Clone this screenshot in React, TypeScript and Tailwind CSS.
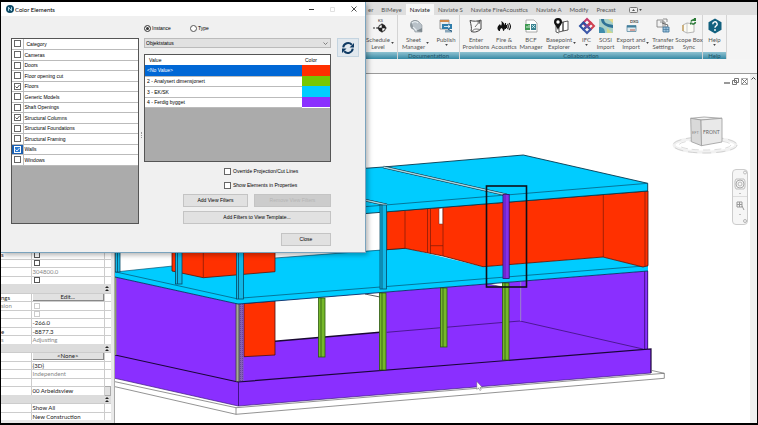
import { useState, type ReactNode } from "react";
import { clsx } from "clsx";

const TABS = [
  "er",
  "BIMeye",
  "Naviate",
  "Naviate S",
  "Naviate FireAcoustics",
  "Naviate A",
  "Modify",
  "Precast",
];

const CATEGORIES = [
  { name: "Cameras", checked: false },
  { name: "Doors", checked: false },
  { name: "Floor opening cut", checked: false },
  { name: "Floors", checked: true },
  { name: "Generic Models", checked: false },
  { name: "Shaft Openings", checked: false },
  { name: "Structural Columns", checked: true },
  { name: "Structural Foundations", checked: false },
  { name: "Structural Framing", checked: false },
  { name: "Walls", checked: true },
  { name: "Windows", checked: false },
];

const VALUES = [
  { name: "<No Value>", color: "bg-[#ff3000]" },
  { name: "2 - Analysert dimensjonert", color: "bg-[#76c800]" },
  { name: "3 - EK/SK", color: "bg-[#00ccff]" },
  { name: "4 - Ferdig bygget", color: "bg-[#8a2fff]" },
];

type Row = {
  kind: "check" | "text" | "button" | "section";
  label?: string;
  value?: string;
  muted?: boolean;
};

const PROPERTIES: Row[] = [
  { kind: "check", label: "s" },
  { kind: "check" },
  { kind: "text", value: "304800.0", muted: true },
  { kind: "check" },
  { kind: "section" },
  { kind: "button", label: "ngs", value: "Edit..." },
  { kind: "check", label: "sion", muted: true },
  { kind: "check", muted: true },
  { kind: "text", value: "-266.0" },
  { kind: "text", label: "e", value: "-8877.3" },
  { kind: "text", label: "s", value: "Adjusting", muted: true },
  { kind: "section" },
  { kind: "button", value: "<None>" },
  { kind: "text", value: "{3D}" },
  { kind: "text", value: "Independent", muted: true },
  { kind: "text" },
  { kind: "text", value: "00 Arbeidsview" },
  { kind: "section" },
  { kind: "text", value: "Show All" },
  { kind: "text", value: "New Construction" },
];

/* ---------- ribbon icons ---------- */

const icons: Record<string, ReactNode> = {
  level: (
    <>
      <path d="M1 10h5" stroke="#333" strokeDasharray="2 1" />
      <text x="6" y="4" fontSize="4" fill="#333">KS</text>
      <circle cx="10" cy="10" r="3.5" fill="#fff" stroke="#222" />
      <path d="M10 6.500A3.500 3.500 0 0 1 13.500 10H10zM10 13.500A3.500 3.500 0 0 1 6.500 10H10z" fill="#222" />
      <path d="M10 5v10M5 10h10" stroke="#222" strokeWidth=".6" />
    </>
  ),
  sheet: (
    <>
      <circle cx="7" cy="7" r="5" fill="#8e979d" />
      <path d="M3 4l7-1 4 4v7H7z" fill="#b8c1c8" stroke="#8b959c" strokeWidth=".6" />
      <path d="M4 5a4 4 0 0 1 6 0M5 9l4 4" stroke="#e8eef2" strokeWidth="1.200" fill="none" />
      <path d="M8 13l6-3v4z" fill="#7e898f" />
    </>
  ),
  publish: (
    <>
      <path d="M2 2h9v9H2z" fill="#e9edf0" stroke="#777" strokeWidth=".7" />
      <path d="M2 2h9v2H2z" fill="#d1894b" />
      <path d="M4 6h10v5H4z" fill="#2f7dab" />
      <path d="M6 8.500h6M10 7l2 1.500L10 10" stroke="#fff" fill="none" strokeWidth=".8" />
      <path d="M7 12h7v2.500H7z" fill="#8aa7bb" />
      <path d="M10 11l4 2.500" stroke="#1d567d" />
    </>
  ),
  enter: (
    <>
      <path d="M2 2.500c4 1 7 1 11-.5v9c-3 3-8 4-10 2 1-3 0-6-1-10.500z" fill="#f7f7f7" stroke="#444" />
      <path d="M3 14c2-1 2-3 5-3s4 1 5 0" fill="none" stroke="#555" strokeWidth=".8" />
      <path d="M12 3L7 9M9 4l3-1-1 3" fill="none" stroke="#555" strokeWidth=".8" />
    </>
  ),
  fire: (
    <>
      <path d="M3 13C0 10 2 8 4 6c0 1 1 1 1 2C6 6 6 4 5 3c3 1 5 5 4 7-.3 2-1 3-2 3 0-1 0-2-1.500-3C4 11 4 12 4 13z" fill="#111" />
      <path d="M9.500 5v6M11.500 6c1 1 1 4 0 5M13 5c1.700 2 1.700 5 0 7M9 7.500h1.500v2H9z" fill="none" stroke="#111" strokeWidth="1.100" />
    </>
  ),
  bcf: (
    <>
      <path d="M3 2h8l3 3v9H3z" fill="#fff" stroke="#888" strokeWidth=".7" />
      <path d="M2 6h5v6H2z" fill="#3f9a53" />
      <path d="M4 10V8M6 10V7" stroke="#fff" strokeWidth=".8" />
      <path d="M8 6h5v6H8z" fill="#3c8290" />
      <path d="M9 10l3-3M9 7l3 3" stroke="#dff" strokeWidth=".8" />
    </>
  ),
  base: (
    <>
      <path d="M6 5l4-1v9l-4 1zM10 4l5-1v9l-5 1zM3 8v6l3 1" fill="#fff" stroke="#333" strokeWidth=".8" />
      <path d="M5 0a4 4 0 0 1 4 4c0 2.500-2.500 4-4 8C3.500 8 1 6.500 1 4a4 4 0 0 1 4-4z" fill="#111" />
      <circle cx="5" cy="4" r="1.700" fill="#fff" />
    </>
  ),
  ifc: (
    <>
      <g fill="none" strokeWidth="2">
        <path d="M8 1L4 5l4 4 4-4z" stroke="#c43a6b" />
        <path d="M4.500 4.500L1 8l3.500 3.500L8 8z" stroke="#2a4fa0" />
        <path d="M11.500 4.500L15 8l-3.500 3.500L8 8z" stroke="#d0414f" />
        <path d="M8 8l-3.500 3.500L8 15l3.500-3.500z" stroke="#3d58a8" />
      </g>
      <path d="M6.500 6.500h3v3h-3z" fill="#7d4ca0" />
    </>
  ),
  sosi: (
    <>
      <path d="M1 1h14v14H1z" fill="#a7d0c8" />
      <path d="M1 9c4 0 6 2 6 6H1z" fill="#3f8dad" />
      <path d="M6 1c0 4 3 5 9 6v3C8 9 3 6 3 1z" fill="#2f7297" />
      <path d="M9 10l6 5H9z" fill="#cfd88b" />
      <path d="M10 1h5v4z" fill="#e6d98c" />
    </>
  ),
  export: (
    <>
      <text x="5" y="5" fontSize="4" fontWeight="700" fill="#444">DXG</text>
      <path d="M2 7.500h9v6H2z" fill="#dfe9ee" stroke="#5c8ca3" strokeWidth=".8" />
      <path d="M2 7.500h9v2H2z" fill="#417f9c" />
      <path d="M5 12h5" stroke="#c05a48" />
    </>
  ),
  transfer: (
    <>
      <path d="M2 2h6v7H2zM8 1h4v3M5 4h5v6" fill="#f3f3f3" stroke="#777" strokeWidth=".8" />
      <path d="M7 5l6 2-1 2" fill="none" stroke="#555" strokeWidth=".8" />
      <path d="M8 9h6v5H8z" fill="#9ec3dc" stroke="#3a6f96" strokeWidth=".8" />
      <path d="M11 9v5M8 11.500h6" stroke="#3a6f96" strokeWidth=".6" />
    </>
  ),
  scope: (
    <>
      <path d="M2 7l4-2 7 1v8l-7 1-4-2z" fill="#fbfbf5" stroke="#999" strokeWidth=".7" />
      <path d="M2 7v6" stroke="#c99b4a" strokeWidth="1.200" />
      <path d="M6 5v10" stroke="#aaa" strokeWidth=".6" />
      <path d="M10 3.500a2.500 2.500 0 0 1 4-1M14.500 4a2.500 2.500 0 0 1-4 1.500" fill="none" stroke="#2b7b37" strokeWidth="1.500" />
      <path d="M13 0h2v3h-3zM9 7V4.500h2.500z" fill="#2b7b37" />
    </>
  ),
  help: (
    <>
      <path d="M8 .500l6.500 3.700v7.600L8 15.500 1.500 11.800V4.200z" fill="#12617f" />
      <path d="M5.800 6.200a2.200 2.200 0 1 1 3.400 1.700c-.8.600-1.200.8-1.200 1.800" fill="none" stroke="#fff" strokeWidth="1.400" />
      <circle cx="8" cy="12" r=".9" fill="#fff" />
    </>
  ),
};

type Tool = { icon: string; lines: string[]; width: string; menu?: boolean };

const GROUPS: { title: string; className: string; tools: Tool[] }[] = [
  {
    title: "",
    className: "pl-[362px]",
    tools: [{ icon: "level", lines: ["Schedule", "Level"], width: "w-[34px]", menu: true }],
  },
  {
    title: "Documentation",
    className: "",
    tools: [
      { icon: "sheet", lines: ["Sheet", "Manager"], width: "w-[35px]", menu: true },
      { icon: "publish", lines: ["Publish"], width: "w-[26px]", menu: true },
    ],
  },
  {
    title: "Collaboration",
    className: "pl-[2px]",
    tools: [
      { icon: "enter", lines: ["Enter", "Provisions"], width: "w-[28px]" },
      { icon: "fire", lines: ["Fire &", "Acoustics"], width: "w-[28px]" },
      { icon: "bcf", lines: ["BCF", "Manager"], width: "w-[26px]" },
      { icon: "base", lines: ["Basepoint", "Explorer"], width: "w-[34px]", menu: true },
      { icon: "ifc", lines: ["IFC"], width: "w-[17px]", menu: true },
      { icon: "sosi", lines: ["SOSI", "Import"], width: "w-[21px]" },
      { icon: "export", lines: ["Export and", "Import"], width: "w-[34px]", menu: true },
      { icon: "transfer", lines: ["Transfer", "Settings"], width: "w-[26px]" },
      { icon: "scope", lines: ["Scope Box", "Sync"], width: "w-[26px]" },
    ],
  },
  {
    title: "Help",
    className: "",
    tools: [{ icon: "help", lines: ["Help"], width: "w-[23px]", menu: true }],
  },
];

function Caret() {
  return (
    <svg viewBox="0 0 4 3" className="h-[2px] w-[3px] shrink-0">
      <path d="M0 0h4L2 3z" fill="#444" />
    </svg>
  );
}

function ToolButton({ icon, lines, width, menu }: Tool) {
  return (
    <button className={clsx("flex shrink-0 flex-col items-center pt-[3px]", width)}>
      <svg viewBox="0 0 16 16" className="h-4 w-4 overflow-visible">
        {icons[icon]}
      </svg>
      <span className={clsx("flex items-center gap-px pt-[2px]", lines.length === 1 && "flex-col")}>
        <span className="whitespace-nowrap text-center leading-[7px]">
          {lines.map((line) => (
            <span key={line} className="block">
              {line}
            </span>
          ))}
        </span>
        {menu && <Caret />}
      </span>
    </button>
  );
}

function Ribbon() {
  return (
    <header className="overflow-hidden border-b border-[#9a9a9a] bg-[#f4f4f4] text-[#555]">
      <nav className="flex h-[13px] items-end bg-[#dedede] pl-[363px]">
        {TABS.map((tab) => (
          <button
            key={tab}
            className={clsx(
              "h-[11px] whitespace-nowrap px-1 leading-[11px]",
              tab === "Naviate" && "bg-[#f7f7f7] text-[#222]",
            )}
          >
            {tab}
          </button>
        ))}
        <button aria-label="Ribbon display" className="ml-[9px] flex h-[11px] items-center gap-px">
          <svg viewBox="0 0 9 6" className="h-[6px] w-[9px]">
            <rect x=".5" y=".5" width="8" height="5" rx="1" fill="#eee" stroke="#777" />
            <path d="M3 4h3L4.500 2z" fill="#555" />
          </svg>
          <Caret />
        </button>
      </nav>
      <div className="flex">
        {GROUPS.map((g, i) => (
          <section key={i} className="border-r border-[#d4d4d4]">
            <div className={clsx("flex h-[37px]", g.className)}>
              {g.tools.map((t) => (
                <ToolButton key={t.lines[0]} {...t} />
              ))}
            </div>
            <h2 className="h-[7px] bg-linear-to-b from-[#8fc3d2] to-[#3389a4] text-center leading-[7px] text-[#1d5468]">
              {g.title}
            </h2>
          </section>
        ))}
      </div>
      <div className="h-[14px] bg-[#f5f5f5]" />
    </header>
  );
}

/* ---------- properties palette ---------- */

function PropertyValue({ row }: { row: Row }) {
  if (row.kind === "check")
    return (
      <input
        type="checkbox"
        aria-label={row.label ?? "Option"}
        disabled={row.muted}
        className="ml-px block h-[6px] w-[6px] appearance-none border border-[#555] bg-white disabled:border-[#ccc]"
      />
    );
  if (row.kind === "button")
    return (
      <button className="block h-[7px] w-full border-r border-b border-[#888] bg-[#e1e1e1] leading-[6px]">
        {row.value}
      </button>
    );
  return <>{row.value}</>;
}

function Properties() {
  return (
    <aside className="flex w-[114px] shrink-0 flex-col justify-end border-r border-[#aaa] bg-[#e9e9e9] pr-[3px] pb-[3px]">
      <table className="w-full table-fixed border-collapse bg-white leading-[7px] text-[#222]">
        <colgroup>
          <col className="w-[30px]" />
          <col />
          <col className="w-[6px]" />
        </colgroup>
        <tbody>
          {PROPERTIES.map((row, i) =>
            row.kind === "section" ? (
              <tr key={i} className="h-[9px] bg-[#dcdcdc] even:h-[8px]">
                <td colSpan={2} className="p-0" />
                <td className="p-0">
                  <svg viewBox="0 0 4 6" className="block h-[6px] w-1">
                    <path d="M0 3l2-2 2 2zM0 6l2-2 2 2z" fill="#222" />
                  </svg>
                </td>
              </tr>
            ) : (
              <tr
                key={i}
                className={clsx("h-[9px] border-t border-[#ccc] even:h-[8px]", row.muted && "text-[#888]")}
              >
                <td className="overflow-hidden p-0">{row.label}</td>
                <td className="border-x border-[#ccc] p-0 pl-px whitespace-nowrap">
                  <PropertyValue row={row} />
                </td>
                <td className={clsx("p-0", row.value === "00 Arbeidsview" && "border border-[#aaa] bg-[#e1e1e1]")} />
              </tr>
            ),
          )}
        </tbody>
      </table>
    </aside>
  );
}

/* ---------- 3D view ---------- */

const CYAN = "#00ccff";
const RED = "#ff3000";
const PURPLE = "#8a2fff";
const GREEN = "#76b82a";

function Post({ x, top, bottom }: { x: number; top: number; bottom: number }) {
  return (
    <g stroke="#2c5a10" strokeWidth=".8">
      <rect x={x} y={top} width="6.500" height={bottom - top} fill={GREEN} />
      <path d={`M${x + 2.5} ${top}V${bottom}`} />
    </g>
  );
}

function CyanColumn({ x, top, bottom, width }: { x: number; top: number; bottom: number; width: number }) {
  return (
    <g stroke="#064a66" strokeWidth=".8">
      <rect x={x} y={top} width={width} height={bottom - top} fill="#10b8e8" />
      <path d={`M${x + 2} ${top}V${bottom}`} />
    </g>
  );
}

function Model() {
  return (
    <svg viewBox="115 74 635 349" preserveAspectRatio="xMinYMin meet" className="block w-full">
      {/* footing */}
      <path
        d="M115 381.700L236 407.700L664.300 373.300V378.300L236 414.300L115 386.700M236 407.700V414.300M652 370.500L664.300 373.300"
        fill="none"
        stroke="#666"
        strokeWidth=".7"
      />

      {/* lower storey walls */}
      <path d="M115 277L238 304L648 271V349H651V373L238.300 406L115 378.300Z" fill={PURPLE} />
      <path d="M275 301L380 292.500V332.300L275 341.300Z" fill="#fff" />
      <path d="M275 341.300L380 332.300" stroke="#1a0a33" strokeWidth="1.400" />
      <path d="M365 294L380 297" stroke="#333" strokeWidth=".8" />
      <path d="M244 303.500L275 301V355L244 356.700Z" fill={RED} stroke="#4a1010" strokeWidth=".8" />
      <path d="M386.700 332.300L520 321L643 349" fill="none" stroke="#3c1279" strokeWidth=".8" />
      <path d="M520.700 282V321" stroke="#9a86c8" strokeWidth="1" />
      <path d="M644.700 271V349M647.700 271V349" stroke="#2d0b66" strokeWidth=".8" />
      <path d="M115 355L238 382L651 349V373" fill="none" stroke="#1a0638" strokeWidth="1.200" />
      <path d="M115 378.300L238.300 406L651 373" fill="none" stroke="#3c1a80" strokeWidth=".7" />
      <path d="M238.500 382V406" stroke="#2d0b66" strokeWidth=".8" />
      <path d="M486 283.500L503 282V287Z" fill="#fff" stroke="#333" strokeWidth=".5" />
      <rect x="239" y="304" width="4.500" height="77" fill="#8561b5" />
      <path d="M240.500 304V381M242.500 304V381" stroke="#5a3c8c" strokeWidth=".7" strokeDasharray="1 1" />
      <rect x="236" y="303.500" width="3" height="78" fill="#a5a89a" stroke="#333" strokeWidth=".7" />
      <path d="M115.700 277V355" stroke="#8aa06a" strokeWidth="1.400" />

      {/* middle slab */}
      <path
        d="M115 272L173 266L275 258L405 248L483 266.700L603 257L643 267L648 265.700V271L238 304L115 277Z"
        fill={CYAN}
      />
      <path d="M115 277L238 304L648 271" fill="none" stroke="#0a2f66" strokeWidth=".9" />
      <path
        d="M115 272L173 266M275 258L405 248.300M116 272L236 298.500L648 265.700"
        fill="none"
        stroke="#07506e"
        strokeWidth=".7"
      />

      {/* upper storey walls */}
      <path d="M172 240H275V271.700L203.300 277.700L172 271Z" fill={RED} stroke="#5a1408" strokeWidth=".8" />
      <path d="M203.300 240V277.700" stroke="#7a1a08" strokeWidth=".7" />
      <path
        d="M386.700 211.700L648 191V265.700L643 267L603 257L483 266.700L443 256L405 248.300L386.700 249.700Z"
        fill={RED}
        stroke="#4a1208"
        strokeWidth=".8"
      />
      <path
        d="M405 210V248.300M427.500 208.500V253M430.500 208.500V253.500M443 207V256M430.500 245.700H443M603.300 194V257M645 191V266"
        stroke="#7a1a08"
        strokeWidth=".7"
        fill="none"
      />
      <path d="M439 208.500L442.700 208V224H439Z" fill="#fff" stroke="#633" strokeWidth=".5" />

      {/* roof */}
      <path
        d="M355 169L383.300 167L523.300 155L647.700 183.300V191L366 213.500L355 214Z"
        fill={CYAN}
        stroke="#06394f"
        strokeWidth=".9"
      />
      <path d="M355 207.500L647.700 183.300" stroke="#07506e" strokeWidth=".7" />
      <path d="M383.500 167L507 195M360 199L387 205" stroke="#123" strokeWidth="2.400" />
      <path d="M383.500 167L507 195M360 199L387 205" stroke="#a3d6df" strokeWidth="1.300" />

      {/* columns */}
      <CyanColumn x={115.5} top={240} bottom={272} width={4.5} />
      <CyanColumn x={175.5} top={240} bottom={284} width={6.5} />
      <CyanColumn x={236.5} top={240} bottom={299} width={7} />
      <CyanColumn x={380} top={205} bottom={289} width={6.5} />
      <Post x={318.5} top={298} bottom={357} />
      <Post x={379.5} top={293} bottom={370} />
      <Post x={440.5} top={288} bottom={347} />
      <Post x={502.5} top={283} bottom={360} />
      <rect x="503" y="194.500" width="6.200" height="84" fill="#8430ea" stroke="#2d0b66" strokeWidth=".8" />
      <path d="M505 195V278" stroke="#4a1899" strokeWidth=".7" />
      <rect x="486.500" y="186" width="40" height="101" fill="none" stroke="#101018" strokeWidth="1.600" />

      {/* view cube */}
      <g stroke="#c4c4c4" fill="none">
        <ellipse cx="705" cy="145" rx="31" ry="7" strokeWidth="3" stroke="#f1f1f1" />
        <ellipse cx="705" cy="145" rx="32" ry="8" strokeWidth=".7" strokeDasharray="9 5" />
        <ellipse cx="705" cy="145" rx="26" ry="5" strokeWidth=".6" strokeDasharray="7 4" />
      </g>
      <g stroke="#9b9b9b" strokeWidth=".8">
        <path d="M690.700 118.300L704 117L722 118.300L701 120Z" fill="#f4f4f4" />
        <path d="M690.700 118.300L701 120L701.500 145.700L691.300 141.700Z" fill="#d9d9d9" />
        <path d="M701 120L722 118.300V142L701.500 145.700Z" fill="#e9e9e9" />
      </g>
      <text x="692" y="134" fontSize="4" fill="#888">EFT</text>
      <text x="703" y="134" fontSize="5" fill="#666">FRONT</text>

      {/* cursor */}
      <path
        d="M476.800 381.500V389.500L478.600 387.900L479.900 390.500L481.200 389.900L480 387.400H482.300Z"
        fill="#fff"
        stroke="#555"
        strokeWidth=".4"
      />
    </svg>
  );
}

function View() {
  return (
    <main className="relative min-w-0 flex-1 overflow-hidden bg-white">
      <Model />
      <div className="absolute top-[3px] right-[2px] flex items-center gap-[2px] text-[#777]">
        <button aria-label="Minimise view" className="flex h-2 w-[6px] items-end pb-px">
          <span className="h-[2px] w-full bg-[#999]" />
        </button>
        <button aria-label="Restore view">
          <svg viewBox="0 0 7 7" className="h-[7px] w-[7px]" fill="none" stroke="currentColor">
            <path d="M2.500 .500h4v4h-4zM.500 2.500h4v4h-4z" />
          </svg>
        </button>
        <button aria-label="Close view">
          <svg viewBox="0 0 7 7" className="h-[7px] w-[7px]" fill="none" stroke="currentColor">
            <path d="M.500 .500h6v6h-6z" strokeWidth=".6" />
            <path d="M1 1l5 5M6 1L1 6" />
          </svg>
        </button>
      </div>
      <div className="absolute top-[95px] right-[2px] flex w-4 flex-col items-center rounded-sm border border-[#ccc] bg-[#f6f6f6]">
        <button aria-label="Steering wheel" className="flex h-[27px] w-full items-center justify-center border-b border-[#ddd]">
          <svg viewBox="0 0 14 26" className="h-[26px] w-[14px]" fill="none" stroke="#aaa">
            <circle cx="12" cy="2.500" r="1.500" strokeWidth=".7" />
            <path d="M3 9h8l1 2v6l-1 2H3l-1-2v-6z" strokeWidth=".7" />
            <circle cx="7" cy="14" r="4" />
            <circle cx="7" cy="14" r="2" strokeWidth=".8" />
            <path d="M6 23h2L7 24z" fill="#888" stroke="none" />
          </svg>
        </button>
        <button aria-label="Zoom" className="flex h-[27px] w-full items-center justify-center">
          <svg viewBox="0 0 14 26" className="h-[26px] w-[14px]" fill="none" stroke="#999">
            <path d="M4 4h5v5H4zM4 6.500h5M6.500 4v5" />
            <path d="M9 8l2 4" />
            <path d="M6 16h2L7 17z" fill="#888" stroke="none" />
            <circle cx="12" cy="23" r="1.500" strokeWidth=".7" />
          </svg>
        </button>
      </div>
    </main>
  );
}

/* ---------- Color Elements dialog ---------- */

function Check({ id, label, checked, onDark }: { id: string; label?: string; checked?: boolean; onDark?: boolean }) {
  return (
    <span className="relative block h-[7px] w-[7px] shrink-0">
      <input
        id={id}
        type="checkbox"
        aria-label={label}
        defaultChecked={checked}
        className={clsx(
          "peer block h-[7px] w-[7px] appearance-none border",
          onDark ? "border-white bg-[#2a7bd4]" : "border-[#666] bg-white",
        )}
      />
      <svg
        viewBox="0 0 7 7"
        className={clsx(
          "pointer-events-none absolute inset-0 hidden h-[7px] w-[7px] peer-checked:block",
          onDark ? "text-white" : "text-[#444]",
        )}
      >
        <path d="M1.500 3.500L3 5l2.500-3" fill="none" stroke="currentColor" strokeWidth=".9" />
      </svg>
    </span>
  );
}

function CategoryTable() {
  return (
    <div className="h-[186px] w-[128px] border border-[#555] bg-[#ababab]">
      <table className="w-full border-collapse bg-white leading-[8px]">
        <tbody>
          <tr className="h-[10px]">
            <th className="w-[11px] border-r border-b border-[#bbb] p-0 pl-[2px]">
              <Check id="cat-all" label="All categories" />
            </th>
            <th className="border-b border-[#bbb] p-0 pl-[3px] text-left font-normal">Category</th>
          </tr>
          {CATEGORIES.map((c) => (
            <tr key={c.name} className="h-[10px] even:h-[11px]">
              <td className={clsx("border-r border-b border-[#bbb] p-0 pl-[2px]", c.name === "Walls" && "bg-[#1b5fb0]")}>
                <Check id={c.name} checked={c.checked} onDark={c.name === "Walls"} />
              </td>
              <td className="border-b border-[#bbb] p-0 pl-px">
                <label htmlFor={c.name} className="block">
                  {c.name}
                </label>
              </td>
            </tr>
          ))}
        </tbody>
      </table>
    </div>
  );
}

function ValueTable() {
  const [selected, setSelected] = useState(VALUES[0].name);
  return (
    <div className="h-[108px] border border-[#555] bg-[#ababab]">
      <table className="w-full border-collapse bg-white leading-[8px]">
        <thead>
          <tr className="h-[10px]">
            <th className="p-0 pl-1 text-left font-normal">Value</th>
            <th className="w-[28px] p-0 pl-[3px] text-left font-normal">Color</th>
          </tr>
        </thead>
        <tbody>
          {VALUES.map((v) => (
            <tr
              key={v.name}
              onClick={() => setSelected(v.name)}
              className={clsx("h-[11px] even:h-[10px]", v.name === selected && "bg-[#0067d5] text-white")}
            >
              <td className="border-b border-[#bbb] p-0 pl-[2px]">{v.name}</td>
              <td className={clsx("p-0", v.color)} />
            </tr>
          ))}
        </tbody>
      </table>
    </div>
  );
}

const radio =
  "h-[7px] w-[7px] appearance-none rounded-full border border-[#555] bg-white checked:bg-[#333] checked:shadow-[inset_0_0_0_1px_white]";
const button = "h-[13px] border border-[#c4c4c4] bg-[#e1e1e1] leading-[11px]";

function ColorElementsDialog() {
  return (
    <div
      role="dialog"
      aria-label="Color Elements"
      className="absolute top-0 left-0 w-[365px] border-r border-b border-[#7aa3bd] bg-[#f0f0f0] font-['Liberation_Sans',sans-serif] text-[5px] text-black shadow-[2px_2px_5px_rgba(0,0,0,0.3)]"
    >
      <div className="flex h-[14px] items-center bg-white pr-2 pl-[5px] font-[Lato,sans-serif] text-[6px]">
        <svg viewBox="0 0 8 8" className="h-2 w-2">
          <circle cx="4" cy="4" r="4" fill="#0e4a66" />
          <path d="M2.500 5.800V2.200L5.500 5.800V2.200" fill="none" stroke="#bfe6f5" strokeWidth=".9" />
        </svg>
        <h1 className="flex-1 pl-px">Color Elements</h1>
        <div className="flex items-center gap-4">
          <button aria-label="Minimise">
            <svg viewBox="0 0 5 5" className="h-[5px] w-[5px]">
              <path d="M0 2.500h5" stroke="#333" />
            </svg>
          </button>
          <button aria-label="Maximise" disabled>
            <svg viewBox="0 0 5 5" className="h-[5px] w-[5px]">
              <path d="M.500 .500h4v4h-4z" fill="none" stroke="#e0e0e0" />
            </svg>
          </button>
          <button aria-label="Close window">
            <svg viewBox="0 0 6 6" className="h-[6px] w-[6px]">
              <path d="M.500 .500l5 5M5.500 .500l-5 5" stroke="#222" strokeWidth=".8" />
            </svg>
          </button>
        </div>
      </div>

      <div className="flex pt-[8px] pb-[6px] pl-[10px]">
        <div className="pt-[14px]">
          <CategoryTable />
        </div>
        <div className="flex w-[5px] items-center justify-center">
          <span className="h-[6px] w-px border-l border-dotted border-[#999]" />
        </div>
        <div className="flex w-[187px] flex-col">
          <div className="flex h-[9px] items-center">
            <label className="flex w-[46px] items-center gap-px">
              <input type="radio" name="scope" defaultChecked className={radio} />
              Instance
            </label>
            <label className="flex items-center gap-px">
              <input type="radio" name="scope" className={radio} />
              Type
            </label>
          </div>
          <div className="relative mt-[5px]">
            <select
              aria-label="Parameter"
              className="block h-[10px] w-full appearance-none border border-[#bbb] bg-[#e1e1e1] pl-px leading-[8px]"
            >
              <option>Objektstatus</option>
            </select>
            <svg viewBox="0 0 5 3" className="pointer-events-none absolute top-[4px] right-[3px] h-[3px] w-[5px]">
              <path d="M.500 .500l2 2 2-2" fill="none" stroke="#666" strokeWidth=".8" />
            </svg>
          </div>
          <div className="pt-[6px]">
            <ValueTable />
          </div>
          <div className="flex flex-col gap-[6px] pt-[5px] pl-[80px]">
            <label className="flex h-2 items-center gap-[2px]">
              <Check id="override" />
              Override Projection/Cut Lines
            </label>
            <label className="flex h-2 items-center gap-[2px]">
              <Check id="show" />
              Show Elements in Properties
            </label>
          </div>
          <div className="flex gap-[6px] pt-[5px] pl-[39px]">
            <button className={clsx(button, "w-[65px]")}>Add View Filters</button>
            <button
              disabled
              className="h-[13px] flex-1 border border-[#c4c4c4] bg-[#cccccc] leading-[11px] text-[#b4b4b4]"
            >
              Remove View Filters
            </button>
          </div>
          <div className="flex pt-1 pl-[39px]">
            <button className={clsx(button, "flex-1")}>Add Filters to View Template...</button>
          </div>
          <button className={clsx(button, "mt-[9px] w-[50px] self-end")}>Close</button>
        </div>
        <div className="pt-[14px] pl-[6px]">
          <button
            aria-label="Refresh"
            className="flex h-[19px] w-[22px] items-center justify-center border border-[#c4d4e0] bg-[#e1e8ee]"
          >
            <svg viewBox="0 0 14 14" className="h-[14px] w-[14px]">
              <path
                d="M2.200 6.300a5 5 0 0 1 8.600-2.600M11.800 7.700a5 5 0 0 1-8.600 2.600"
                fill="none"
                stroke="#0f3a63"
                strokeWidth="2"
              />
              <path d="M13 2v4.500H8.500zM1 12V7.500h4.500z" fill="#0f3a63" />
            </svg>
          </button>
        </div>
      </div>
    </div>
  );
}

export default function App() {
  return (
    <div className="relative flex min-h-screen flex-col border-x border-y-2 border-black bg-white font-[Lato,'Open_Sans',sans-serif] text-[6px] leading-[7px]">
      <Ribbon />
      <div className="flex flex-1">
        <Properties />
        <View />
        <div className="flex w-[7px] shrink-0 justify-center bg-[#f0f0f0] pt-[3px]">
          <svg viewBox="0 0 5 3" className="h-[3px] w-[5px]">
            <path d="M.500 2.500l2-2 2 2" fill="none" stroke="#444" />
          </svg>
        </div>
      </div>
      <ColorElementsDialog />
    </div>
  );
}
